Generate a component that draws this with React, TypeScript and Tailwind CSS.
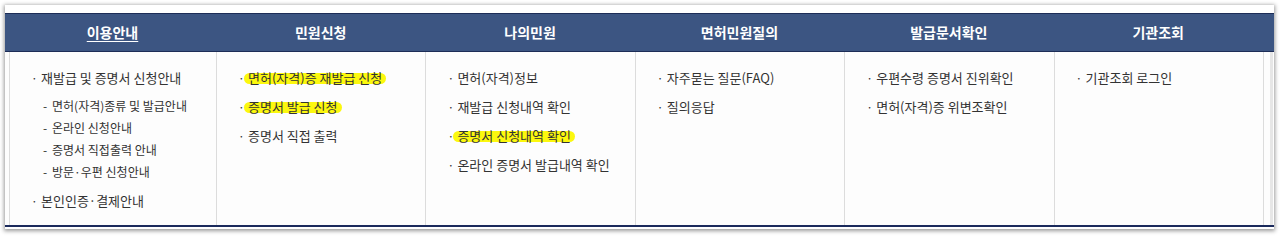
const columns = [
  {
    title: "이용안내",
    active: true,
    items: [
      {
        label: "재발급 및 증명서 신청안내",
        subs: ["면허(자격)종류 및 발급안내", "온라인 신청안내", "증명서 직접출력 안내", "방문·우편 신청안내"],
      },
      { label: "본인인증·결제안내" },
    ],
  },
  {
    title: "민원신청",
    items: [
      { label: "면허(자격)증 재발급 신청", mark: true },
      { label: "증명서 발급 신청", mark: true },
      { label: "증명서 직접 출력" },
    ],
  },
  {
    title: "나의민원",
    items: [
      { label: "면허(자격)정보" },
      { label: "재발급 신청내역 확인" },
      { label: "증명서 신청내역 확인", mark: true },
      { label: "온라인 증명서 발급내역 확인" },
    ],
  },
  {
    title: "면허민원질의",
    items: [{ label: "자주묻는 질문(FAQ)" }, { label: "질의응답" }],
  },
  {
    title: "발급문서확인",
    items: [{ label: "우편수령 증명서 진위확인" }, { label: "면허(자격)증 위변조확인" }],
  },
  {
    title: "기관조회",
    items: [{ label: "기관조회 로그인" }],
  },
];

type Item = { label: string; mark?: boolean; subs?: string[] };

const grid = "grid grid-cols-[207px_repeat(5,209.4px)]";

const MenuItem = ({ item }: { item: Item }) => (
  <li>
    <div className="flex h-[29px] items-center">
      <span className="w-[10px] shrink-0 text-[12px]">·</span>
      {item.mark ? (
        <span className="-ml-[4px] inline-block h-[11px] translate-y-[1px] rounded-full bg-[#fcf80e] px-[4px] leading-[9px]">
          {item.label}
        </span>
      ) : (
        <span>{item.label}</span>
      )}
    </div>
    {item.subs && (
      <ul className="my-[3px] pl-[12px] text-[12px]">
        {item.subs.map((s) => (
          <li key={s} className="flex h-[22px] items-center">
            <span className="w-[9px] shrink-0">-</span>
            <span>{s}</span>
          </li>
        ))}
      </ul>
    )}
  </li>
);

export default function App() {
  return (
    <div
      className="h-[237px] w-[1280px] overflow-hidden bg-white pl-[5px] pt-[5px]"
      style={{ fontFamily: '"Noto Sans CJK KR", "Noto Sans", sans-serif' }}
    >
      <div className="w-[1269px] bg-white pt-[8px] pb-[2px] shadow-[0_1px_4px_1px_rgba(0,0,0,0.4)]">
        <div className="flex h-[39px] border-y border-[#1d2d57] bg-[#3c5582] pl-[4px]">
          <div className={grid}>
            {columns.map((c) => (
              <div key={c.title} className="flex items-center justify-center">
                <span
                  className={`text-[14px] font-bold text-white ${c.active ? "underline underline-offset-[3px]" : ""}`}
                >
                  {c.title}
                </span>
              </div>
            ))}
          </div>
        </div>

        <div className="flex h-[173px] bg-[#fdfdfd] pl-[4px]">
          <div className={`${grid} border-l border-[#dcdcdc]`}>
            {columns.map((c) => (
              <ul key={c.title} className="border-r border-[#dcdcdc] pl-[21px] pt-[11px] text-[13px] text-[#333]">
                {c.items.map((it) => (
                  <MenuItem key={it.label} item={it} />
                ))}
              </ul>
            ))}
          </div>
          <div className="ml-[6px] w-[3px] bg-[#e6e6e6]" />
        </div>

        <div className="h-[2px] bg-[#1b2a5c]" />
      </div>
    </div>
  );
}
